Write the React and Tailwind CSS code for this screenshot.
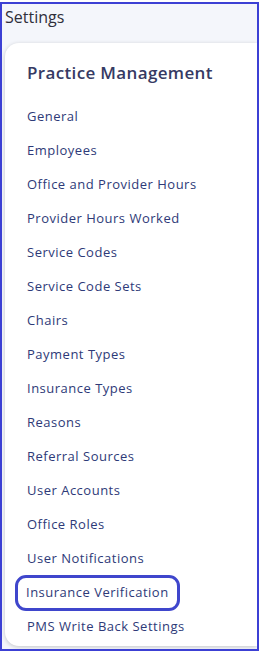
import React from "react";

const items = [
  "General",
  "Employees",
  "Office and Provider Hours",
  "Provider Hours Worked",
  "Service Codes",
  "Service Code Sets",
  "Chairs",
  "Payment Types",
  "Insurance Types",
  "Reasons",
  "Referral Sources",
  "User Accounts",
  "Office Roles",
  "User Notifications",
  "Insurance Verification",
  "PMS Write Back Settings",
];

export default function App() {
  return (
    <div className="w-[259px] h-[652px] bg-white pt-[2px] overflow-hidden" style={{ fontFamily: "'Open Sans', sans-serif" }}>
      <div className="w-[259px] h-[649px] border-2 border-[#3c40d4] bg-[#f4f6fb] flex flex-col overflow-hidden">
        <div className="h-[39px] pl-[3px] pt-[1px] text-[16px] leading-[24px] text-[#2f2f3a] font-medium">Settings</div>
        <div className="ml-[3px] flex-1 mb-[3px] bg-white rounded-l-[14px] shadow-[0_1px_4px_rgba(0,0,0,0.2)] pl-[22px] pt-[18px]">
          <div className="text-[17px] leading-[24px] font-semibold text-[#363a63] tracking-[0.35px]">Practice Management</div>
          <div className="mt-[15px] flex flex-col">
            {items.map((it) => (
              <div key={it} className="h-[34px] flex items-center">
                {it === "Insurance Verification" ? (
                  <span className="-ml-[12px] px-[8px] h-[36px] flex items-center border-[3px] border-[#3f46cc] rounded-[11px] text-[13px] text-[#2e3a78] font-medium tracking-[0.5px]">
                    {it}
                  </span>
                ) : (
                  <span className="text-[13px] text-[#2e3a78] font-medium tracking-[0.5px]">{it}</span>
                )}
              </div>
            ))}
          </div>
        </div>
      </div>
    </div>
  );
}
